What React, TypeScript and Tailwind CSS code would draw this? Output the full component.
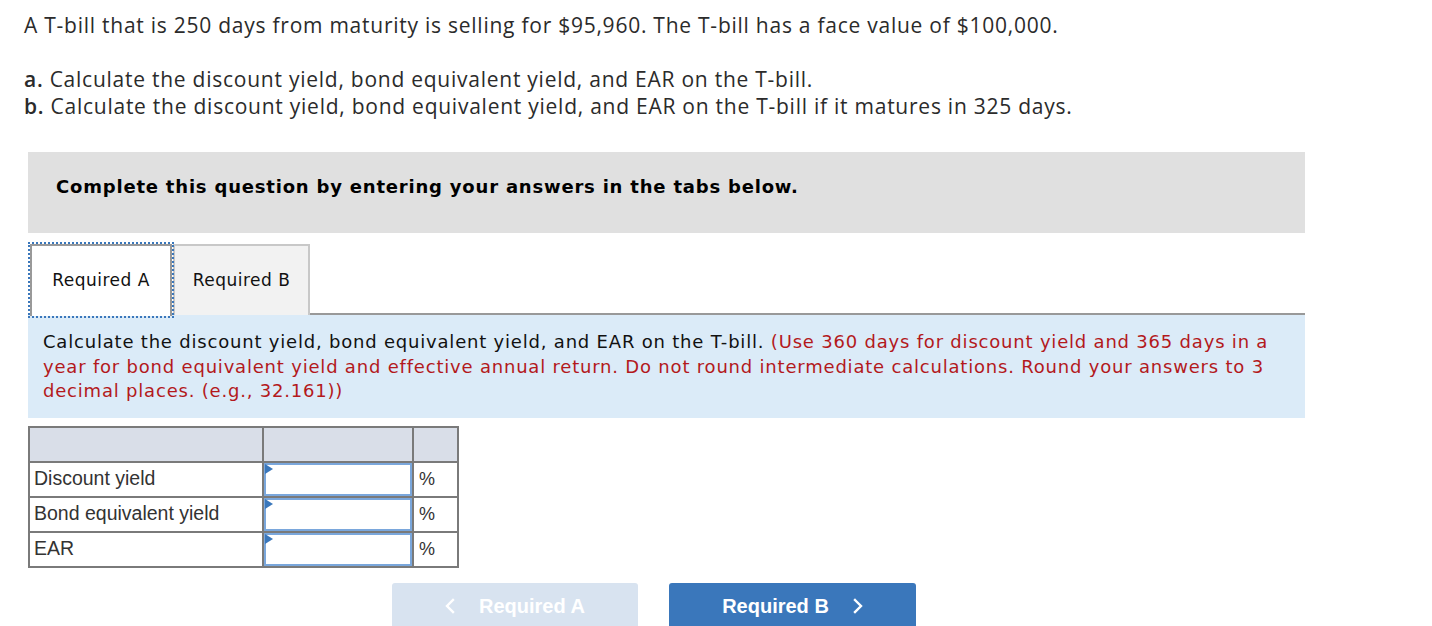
import React from 'react'

const rows = ['Discount yield', 'Bond equivalent yield', 'EAR']

function AnswerInput() {
  return (
    <div className="relative h-[33px] border-2 border-[#7aa7dc] bg-white">
      <span className="absolute -left-[1px] -top-[1px] h-0 w-0 border-y-[5px] border-l-[8px] border-y-transparent border-l-[#3a77bb]" />
    </div>
  )
}

function Chevron({ dir }: { dir: 'left' | 'right' }) {
  return (
    <svg width="10" height="16" viewBox="0 0 10 16" fill="none" stroke="currentColor" strokeWidth="2.4" strokeLinecap="square">
      {dir === 'left' ? <path d="M8 2 L2 8 L8 14" /> : <path d="M2 2 L8 8 L2 14" />}
    </svg>
  )
}

export default function App() {
  return (
    <div className="min-h-screen bg-white pt-[12px] text-[#2b2b2b]">
      {/* Question text */}
      <div className="pl-[24px] [font-family:'Open_Sans',sans-serif] text-[21px] leading-[27px] tracking-[0.75px]">
        <p>A T-bill that is 250 days from maturity is selling for $95,960. The T-bill has a face value of $100,000.</p>
        <p className="mt-[27px]">
          <b className="font-semibold">a.</b> Calculate the discount yield, bond equivalent yield, and EAR on the T-bill.
        </p>
        <p>
          <b className="font-semibold">b.</b> Calculate the discount yield, bond equivalent yield, and EAR on the T-bill if it matures in 325 days.
        </p>
      </div>

      <div className="ml-[28px] mt-[32px] w-[1277px] [font-family:'DejaVu_Sans','Open_Sans',sans-serif]">
        {/* Banner */}
        <div className="flex h-[81px] items-center bg-[#e0e0e0] pb-[12px] pl-[28px] text-[18px] font-bold tracking-[0.8px] text-black">
          Complete this question by entering your answers in the tabs below.
        </div>

        {/* Tabs */}
        <div className="mt-[11px] flex h-[71px] items-stretch text-[17px] tracking-[0.5px] text-[#111]">
          <div className="z-10 ml-[2px] -mb-[1px] flex w-[142px] items-center justify-center border-2 border-b-0 border-[#999] bg-white outline-2 outline-dotted outline-[#3a77bb]">
            Required A
          </div>
          <div className="ml-[1px] flex w-[137px] items-center justify-center border-2 border-b-0 border-[#c8c8c8] bg-[#f2f2f2]">
            Required B
          </div>
          <div className="flex-1 border-b-2 border-[#999]" />
        </div>

        {/* Instructions */}
        <div className="whitespace-nowrap bg-[#dbebf8] px-[15px] pt-[15px] pb-[14px] text-[18px] leading-[24.5px] tracking-[0.8px] text-[#111]">
          Calculate the discount yield, bond equivalent yield, and EAR on the T-bill.{' '}
          <span className="text-[#b3191c]">
            (Use 360 days for discount yield and 365 days in a
            <br />
            year for bond equivalent yield and effective annual return. Do not round intermediate calculations. Round your answers to 3
            <br />
            decimal places. (e.g., 32.161))
          </span>
        </div>

        {/* Answer table */}
        <table className="mt-[8px] border-collapse [font-family:'Liberation_Sans',sans-serif] text-[19.5px] text-[#333]">
          <thead>
            <tr className="h-[35px] bg-[#d9dee8]">
              <th className="w-[234px] border-2 border-[#7a7a7a]" />
              <th className="w-[150px] border-2 border-[#7a7a7a]" />
              <th className="w-[45px] border-2 border-[#7a7a7a]" />
            </tr>
          </thead>
          <tbody>
            {rows.map(label => (
              <tr key={label} className="h-[35px]">
                <td className="border-2 border-[#7a7a7a] px-[4px] align-middle">{label}</td>
                <td className="border-2 border-[#7a7a7a] p-0">
                  <AnswerInput />
                </td>
                <td className="border-2 border-[#7a7a7a] px-[5px] text-[18px]">%</td>
              </tr>
            ))}
          </tbody>
        </table>
      </div>

      {/* Nav buttons */}
      <div className="mt-[15px] flex gap-[31px] pl-[392px] [font-family:'Liberation_Sans',sans-serif] text-[20px] font-bold text-white">
        <button className="flex h-[46px] w-[246px] items-center justify-center gap-[24px] rounded-t-[3px] bg-[#d8e3f0]">
          <Chevron dir="left" />
          <span>Required A</span>
        </button>
        <button className="flex h-[46px] w-[247px] items-center justify-center gap-[24px] rounded-t-[3px] bg-[#3a77bb]">
          <span>Required B</span>
          <Chevron dir="right" />
        </button>
      </div>
    </div>
  )
}
